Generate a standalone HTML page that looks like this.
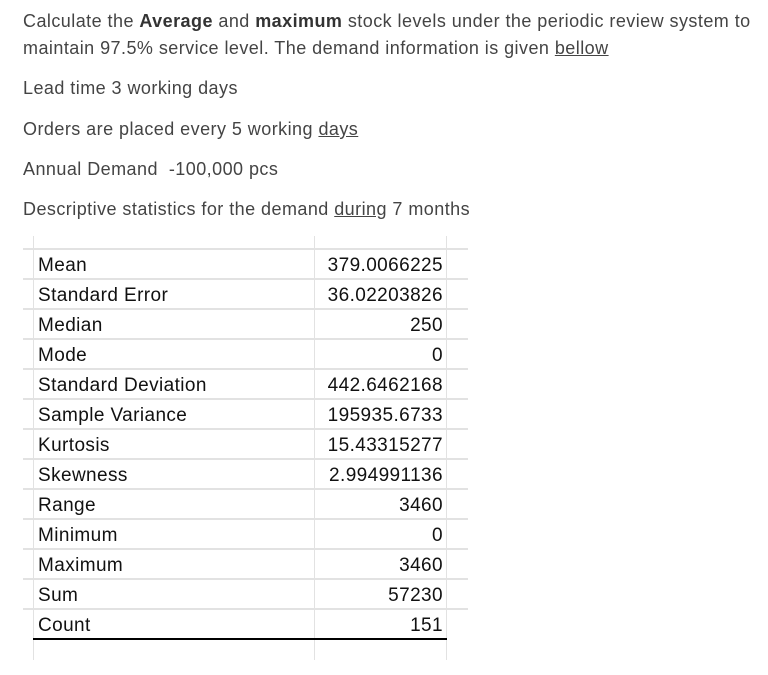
<!DOCTYPE html>
<html><head><meta charset="utf-8"><style>
body{margin:0;background:#fff;width:768px;height:675px;overflow:hidden;position:relative;font-family:"Liberation Sans",sans-serif;}
.t{position:absolute;left:23px;color:#444;font-size:18px;letter-spacing:0.45px;white-space:nowrap;line-height:20px}
.t b{color:#333}
.u{text-decoration:underline}
.grid{position:absolute;background:#e2e2e2}
.cell{position:absolute;font-size:19px;color:#111;white-space:nowrap;line-height:20px;letter-spacing:0.4px}
</style></head><body>
<div class="t" style="top:11px">Calculate the <b>Average</b> and <b>maximum</b> stock levels under the periodic review system to</div>
<div class="t" style="top:38px">maintain 97.5% service level. The demand information is given <span class="u">bellow</span></div>
<div class="t" style="top:78px">Lead time 3 working days</div>
<div class="t" style="top:119px">Orders are placed every 5 working <span class="u">days</span></div>
<div class="t" style="top:159px">Annual Demand &nbsp;-100,000 pcs</div>
<div class="t" style="top:199px">Descriptive statistics for the demand <span class="u">during</span> 7 months</div>

<div class="grid" style="left:33px;top:236px;width:1px;height:424px"></div>
<div class="grid" style="left:314px;top:236px;width:1px;height:424px"></div>
<div class="grid" style="left:446px;top:236px;width:1px;height:424px"></div>
<div class="grid" style="left:23px;top:248px;width:445px;height:2px"></div>
<div class="grid" style="left:23px;top:278px;width:445px;height:2px"></div>
<div class="grid" style="left:23px;top:308px;width:445px;height:2px"></div>
<div class="grid" style="left:23px;top:338px;width:445px;height:2px"></div>
<div class="grid" style="left:23px;top:368px;width:445px;height:2px"></div>
<div class="grid" style="left:23px;top:398px;width:445px;height:2px"></div>
<div class="grid" style="left:23px;top:428px;width:445px;height:2px"></div>
<div class="grid" style="left:23px;top:458px;width:445px;height:2px"></div>
<div class="grid" style="left:23px;top:488px;width:445px;height:2px"></div>
<div class="grid" style="left:23px;top:518px;width:445px;height:2px"></div>
<div class="grid" style="left:23px;top:548px;width:445px;height:2px"></div>
<div class="grid" style="left:23px;top:578px;width:445px;height:2px"></div>
<div class="grid" style="left:23px;top:608px;width:445px;height:2px"></div>
<div style="position:absolute;left:33px;top:638px;width:414px;height:2px;background:#000"></div>

<div class="cell" style="left:38px;top:256px">Mean</div><div class="cell" style="right:325px;top:256px">379.0066225</div>
<div class="cell" style="left:38px;top:286px">Standard Error</div><div class="cell" style="right:325px;top:286px">36.02203826</div>
<div class="cell" style="left:38px;top:316px">Median</div><div class="cell" style="right:325px;top:316px">250</div>
<div class="cell" style="left:38px;top:346px">Mode</div><div class="cell" style="right:325px;top:346px">0</div>
<div class="cell" style="left:38px;top:376px">Standard Deviation</div><div class="cell" style="right:325px;top:376px">442.6462168</div>
<div class="cell" style="left:38px;top:406px">Sample Variance</div><div class="cell" style="right:325px;top:406px">195935.6733</div>
<div class="cell" style="left:38px;top:436px">Kurtosis</div><div class="cell" style="right:325px;top:436px">15.43315277</div>
<div class="cell" style="left:38px;top:466px">Skewness</div><div class="cell" style="right:325px;top:466px">2.994991136</div>
<div class="cell" style="left:38px;top:496px">Range</div><div class="cell" style="right:325px;top:496px">3460</div>
<div class="cell" style="left:38px;top:526px">Minimum</div><div class="cell" style="right:325px;top:526px">0</div>
<div class="cell" style="left:38px;top:556px">Maximum</div><div class="cell" style="right:325px;top:556px">3460</div>
<div class="cell" style="left:38px;top:586px">Sum</div><div class="cell" style="right:325px;top:586px">57230</div>
<div class="cell" style="left:38px;top:616px">Count</div><div class="cell" style="right:325px;top:616px">151</div>
</body></html>
